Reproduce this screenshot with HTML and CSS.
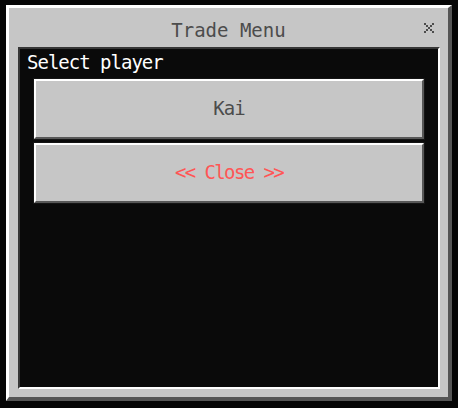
FILE: index.html
```html
<!DOCTYPE html>
<html lang="en">
<head>
<meta charset="UTF-8" />
<meta name="viewport" content="width=device-width, initial-scale=1.0"/>
<title>Trade Menu</title>
<link rel="stylesheet" href="styles.css">
</head>
<body>
  <div class="window">
    <div class="titlebar">
      <span></span>
      <h2 class="title">Trade Menu</h2>
      <button class="close" aria-label="Close">
        <svg width="10" height="10" viewBox="0 0 10 10" shape-rendering="crispEdges">
          <rect x="0" y="0" width="2" height="2"/>
          <rect x="8" y="0" width="2" height="2"/>
          <rect x="2" y="2" width="2" height="2"/>
          <rect x="6" y="2" width="2" height="2"/>
          <rect x="4" y="4" width="2" height="2"/>
          <rect x="2" y="6" width="2" height="2"/>
          <rect x="6" y="6" width="2" height="2"/>
          <rect x="0" y="8" width="2" height="2"/>
          <rect x="8" y="8" width="2" height="2"/>
        </svg>
      </button>
    </div>

    <div class="panel">
      <div class="label">Select player</div>
      <div class="buttons">
        <button class="btn">Kai</button>
        <button class="btn danger">&lt;&lt; Close &gt;&gt;</button>
      </div>
    </div>
  </div>
</body>
</html>
```

FILE: styles.css
```css
:root {
  --bg: #050505;
  --stone: #c6c6c6;
  --light: #ffffff;
  --shade: #555555;
  --panel: #0a0a0a;
  --panel-edge: #373737;
  --ink: #4c4c4c;
  --red: #ff5555;
  --font: 'DejaVu Sans Mono', monospace;
}

* { box-sizing: border-box; }

body {
  margin: 0;
  width: 458px;
  height: 408px;
  background: var(--bg);
  font-family: var(--font);
  font-size: 19px;
  line-height: 20px;
  padding: 5px 6px 7px 6px;
}

.window {
  height: 396px;
  display: flex;
  flex-direction: column;
  background: var(--stone);
  border-top: 3px solid var(--light);
  border-left: 3px solid var(--light);
  border-right: 4px solid var(--shade);
  border-bottom: 4px solid var(--shade);
}

.titlebar {
  height: 39px;
  display: grid;
  grid-template-columns: 1fr auto 1fr;
  align-items: center;
}

.title {
  margin: 0;
  font-size: 19px;
  font-weight: normal;
  color: var(--ink);
  padding-top: 4px;
}

.close {
  justify-self: end;
  margin-right: 14px;
  margin-top: 1px;
  padding: 0;
  border: none;
  background: none;
  width: 10px;
  height: 10px;
  fill: var(--ink);
  display: flex;
}

.panel {
  flex: 1;
  margin: 0 8px 8px 9px;
  background: var(--panel);
  border-top: 2px solid var(--panel-edge);
  border-left: 2px solid var(--panel-edge);
  border-right: 2px solid var(--light);
  border-bottom: 2px solid var(--light);
}

.label {
  color: #fff;
  height: 20px;
  padding: 3px 7px 0;
  margin-bottom: 7px;
  box-sizing: content-box;
  letter-spacing: -1px;
}

.buttons {
  display: flex;
  flex-direction: column;
  gap: 4px;
  padding: 0 14px;
}

.btn {
  height: 60px;
  font-family: var(--font);
  font-size: 19px;
  letter-spacing: -1px;
  color: var(--ink);
  background: var(--stone);
  border: none;
  border-top: 2px solid var(--light);
  border-left: 2px solid var(--light);
  border-right: 2px solid #585858;
  border-bottom: 2px solid #585858;
  padding: 0 0 3px;
  box-shadow: 0 0 0 1px #151515;
}

.danger {
  color: var(--red);
  letter-spacing: -1.6px;
}
```
